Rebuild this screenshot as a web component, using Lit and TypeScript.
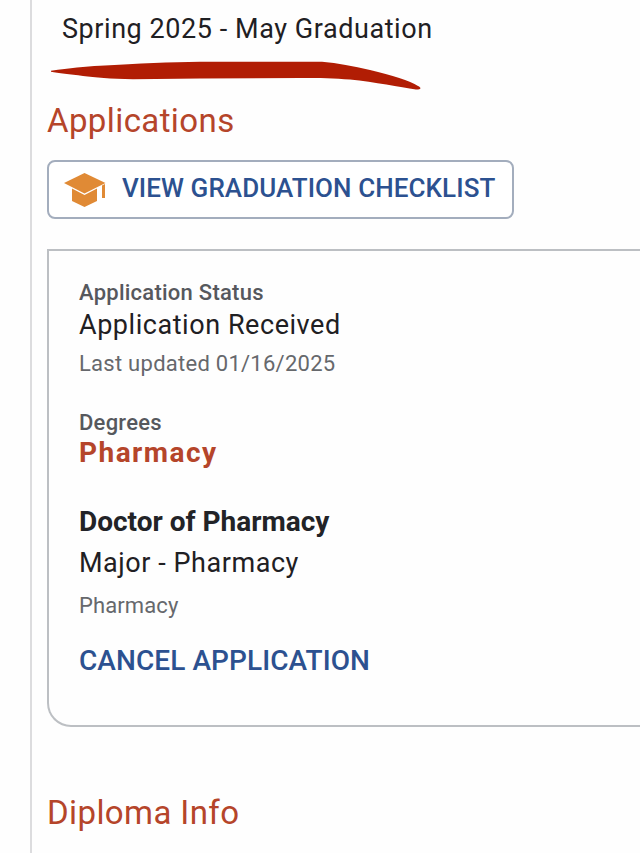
import { LitElement, html, css } from "lit";
import { customElement } from "lit/decorators.js";

@customElement("app-root")
export class AppRoot extends LitElement {
  static styles = css`
    :host {
      display: block;
      width: 640px;
      height: 853px;
      overflow: hidden;
      background: #fefefe;
      font-family: Roboto, "Liberation Sans", sans-serif;
      color: #1f2023;
    }
    .rail {
      margin-left: 30px;
      height: 853px;
      border-left: 2px solid #dcdcde;
      padding-left: 15px;
      position: relative;
      box-sizing: border-box;
      overflow: hidden;
    }
    .term {
      margin: 0;
      padding: 12px 0 0 15px;
      font-size: 27px;
      line-height: 34px;
      font-weight: 400;
      letter-spacing: 0.56px;
    }
    .stroke {
      position: absolute;
      left: 18px;
      top: 60px;
      width: 372px;
      height: 32px;
    }
    h2 {
      margin: 0;
      font-size: 33px;
      line-height: 40px;
      font-weight: 400;
      color: #b5452a;
      letter-spacing: 0.4px;
    }
    .apps { margin-top: 55px; }
    .btn {
      display: flex;
      align-items: center;
      gap: 16px;
      box-sizing: border-box;
      width: 467px;
      height: 59px;
      margin-top: 19px;
      padding-left: 15px;
      border: 2px solid #a3adbd;
      border-radius: 8px;
      background: #fff;
      color: #2c5190;
      font-size: 26px;
      font-weight: 500;
      letter-spacing: 0.08px;
      white-space: nowrap;
    }
    .btn span { padding-bottom: 4px; }
    .btn svg { flex: none; width: 42px; height: 34px; }
    .card {
      box-sizing: border-box;
      width: 640px;
      height: 478px;
      margin-top: 30px;
      padding: 29px 0 0 30px;
      border: 2px solid #bcbfc3;
      border-right: none;
      border-radius: 0 0 0 24px;
      background: #fefefe;
    }
    .label {
      font-size: 22px;
      line-height: 26px;
      font-weight: 500;
      color: #56585d;
      letter-spacing: 0.25px;
    }
    .value { font-size: 27px; line-height: 36px; letter-spacing: 0.55px; }
    .status { margin-top: 1px; }
    .meta {
      margin-top: 6px;
      font-size: 22px;
      line-height: 30px;
      color: #66686c;
      letter-spacing: 0.26px;
    }
    .degrees { margin-top: 31px; }
    .school {
      font-size: 28px;
      line-height: 34px;
      font-weight: 700;
      color: #b5452a;
      letter-spacing: 1.45px;
    }
    .degree {
      margin-top: 35px;
      font-size: 28px;
      line-height: 34px;
      font-weight: 700;
      color: #222327;
    }
    .major { margin-top: 6px; }
    .dept {
      margin-top: 10px;
      font-size: 22px;
      line-height: 30px;
      color: #66686c;
      letter-spacing: 0.1px;
    }
    .cancel {
      margin-top: 23px;
      font-size: 28px;
      line-height: 34px;
      font-weight: 500;
      color: #2c5190;
      letter-spacing: 0.08px;
    }
    .diploma { margin-top: 66px; }
  `;

  render() {
    return html`
      <div class="rail">
        <p class="term">Spring 2025 - May Graduation</p>
        <svg class="stroke" viewBox="0 0 372 32" aria-hidden="true">
          <path
            d="M1 10.7 C20 8 35 6.5 50 5.7 C90 3.5 120 2 150 1.7 L272 1.7 C288 3 303 6 320 10 C342 15 360 21 368 26 C372 28 371 29.5 366 29.5 C350 27.5 325 22 300 19.6 C285 18 270 17.9 250 17.9 L150 18.6 L83 19.2 C60 18.7 45 17.6 33 16 C20 14 8 13 1 11.7 Z"
            fill="#b11d04"
          />
        </svg>
        <h2 class="apps">Applications</h2>
        <div class="btn">
          <svg viewBox="0 0 42 34" aria-hidden="true">
            <path d="M20.5 0 L41.5 10 L20.5 20.5 L0 10 Z" fill="#e08a35" />
            <path d="M8 15.5 L20.5 22 L33 15.5 V28 L20.5 34 L8 28 Z" fill="#e08a35" />
            <path d="M38 12.5 L41 11 V25 H38 Z" fill="#e08a35" />
          </svg>
          <span>VIEW GRADUATION CHECKLIST</span>
        </div>
        <section class="card">
          <div class="label">Application Status</div>
          <div class="value status">Application Received</div>
          <div class="meta">Last updated 01/16/2025</div>
          <div class="label degrees">Degrees</div>
          <div class="school">Pharmacy</div>
          <div class="degree">Doctor of Pharmacy</div>
          <div class="value major">Major - Pharmacy</div>
          <div class="dept">Pharmacy</div>
          <div class="cancel">CANCEL APPLICATION</div>
        </section>
        <h2 class="diploma">Diploma Info</h2>
      </div>
    `;
  }
}
